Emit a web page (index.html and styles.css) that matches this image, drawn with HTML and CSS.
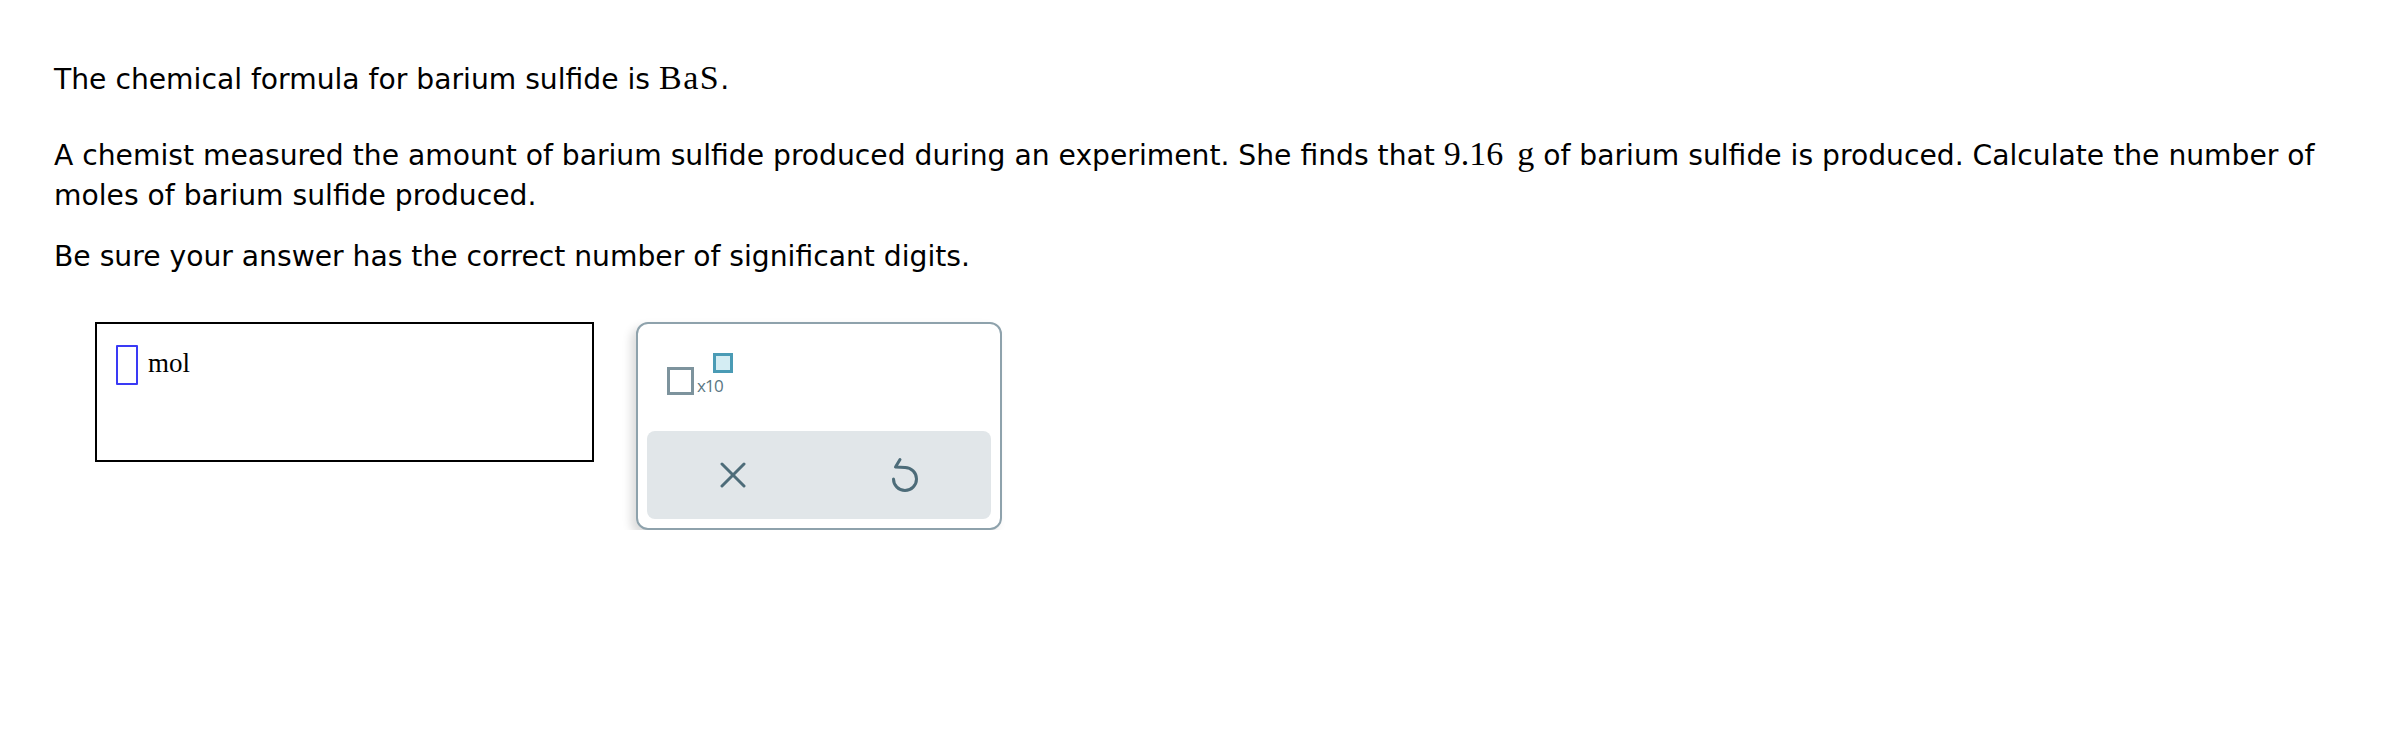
FILE: index.html
```html
<!DOCTYPE html>
<html lang="en">
<head>
  <meta charset="UTF-8">
  <title>Barium sulfide moles</title>
  <link rel="stylesheet" href="styles.css">
</head>
<body>
    <div class="question">
        <p class="intro">The chemical formula for barium sulfide is <span class="math formula">BaS</span>.</p>
        <p class="statement">A chemist measured the amount of barium sulfide produced during an experiment. She finds that <span class="math">9.16<span class="unit">g</span></span> of barium sulfide is produced. Calculate the number of moles of barium sulfide produced.</p>
        <p class="note">Be sure your answer has the correct number of significant digits.</p>

        <div class="answer-row">
            <div class="answer-box">
                <span class="slot"></span>
                <span class="unit-label">mol</span>
            </div>

            <div class="palette">
                <div class="palette-top">
                    <button class="sci-btn" title="scientific notation">
                        <span class="sq-base"></span>
                        <span class="x10">x10</span>
                        <span class="sq-exp"></span>
                    </button>
                </div>
                <div class="palette-actions">
                    <button class="action" title="clear">
                        <svg width="26" height="26" viewBox="0 0 26 26" fill="none" stroke="#4d6c79" stroke-width="3" stroke-linecap="round">
                            <line x1="2" y1="2" x2="24" y2="24"/>
                            <line x1="24" y1="2" x2="2" y2="24"/>
                        </svg>
                    </button>
                    <button class="action" title="undo">
                        <svg width="28" height="36" viewBox="0 0 28 36" fill="none" stroke="#4d6c79" stroke-width="3" stroke-linecap="round" stroke-linejoin="round">
                            <path d="M14 10.5 A11.5 11.5 0 1 1 2.5 22"/>
                            <polyline points="9,2.5 4.5,10 14,10.5"/>
                        </svg>
                    </button>
                </div>
            </div>
        </div>
    </div>
</body>
</html>
```

FILE: styles.css
```css
body {
    margin: 0;
    font-family: "DejaVu Sans", Verdana, sans-serif;
    color: #000;
    background: #fff;
}

.question {
    padding: 0 54px;
    font-size: 28.2px;
    line-height: 40px;
}

p {
    margin: 0;
}

.intro {
    margin-top: 60px;
}

.statement {
    margin-top: 36px;
}

.note {
    margin-top: 21px;
}

.math {
    font-family: "Liberation Serif", "Times New Roman", serif;
    font-size: 34px;
    line-height: 1;
}

.formula {
    letter-spacing: 1.5px;
}

.unit {
    margin-left: 14px;
}

.answer-row {
    display: flex;
    align-items: flex-start;
    gap: 42px;
    margin-top: 45px;
    margin-left: 41px;
}

/* champ de réponse */
.answer-box {
    border: 2px solid #000;
    display: flex;
    align-items: flex-start;
    padding: 19px 0 0 19px;
    width: 476px;
    height: 117px;
}

.slot {
    width: 18px;
    height: 36px;
    border: 2px solid #3a3af5;
    border-radius: 1px;
    margin-top: 2px;
}

.unit-label {
    font-family: "Liberation Serif", "Times New Roman", serif;
    font-size: 27px;
    line-height: 40px;
    margin-left: 10px;
}

/* palette d'outils */
.palette {
    width: 362px;
    height: 204px;
    border: 2px solid #8ea2ac;
    border-radius: 12px;
    box-shadow: -5px 5px 10px rgba(0, 0, 0, 0.14);
    display: flex;
    flex-direction: column;
    background: #fff;
}

.palette-top {
    height: 107px;
    padding-left: 29px;
    box-sizing: border-box;
}

button {
    border: none;
    background: none;
    padding: 0;
    cursor: pointer;
}

.sci-btn {
    display: flex;
    align-items: flex-start;
    margin-top: 31px;
}

.sq-base {
    width: 21px;
    height: 22px;
    border: 3px solid #7d939d;
    margin-top: 12px;
}

.x10 {
    font-family: "Open Sans", sans-serif;
    font-size: 17px;
    line-height: 17px;
    letter-spacing: -0.8px;
    color: #5a7683;
    margin-top: 22px;
    margin-left: 3px;
}

.sq-exp {
    width: 14px;
    height: 14px;
    border: 3px solid #4a9bb5;
    background: #d4edf3;
    margin-left: -10px;
    margin-top: -2px;
}

.palette-actions {
    display: flex;
    height: 88px;
    margin: 0 9px;
    background: #e1e6e9;
    border-radius: 8px;
}

.action {
    flex: 1;
    display: flex;
    justify-content: center;
    align-items: center;
}
```
